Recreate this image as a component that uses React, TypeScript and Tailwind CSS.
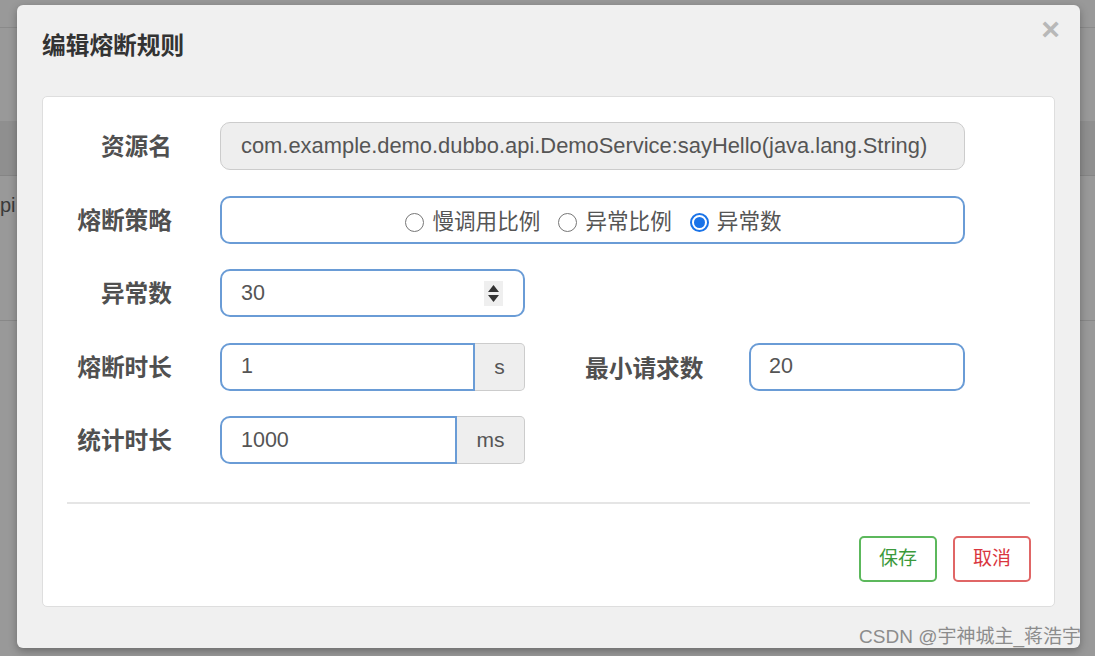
import React from 'react';

const font = { fontFamily: '"Liberation Sans", Arial, "Noto Sans CJK SC", sans-serif' };

const Label: React.FC<{ text: string; w?: string }> = ({ text, w = 'w-[129px]' }) => (
  <div className={`${w} shrink-0 text-right text-[23.7px] font-bold text-[#505050] leading-none pt-[4px]`}>{text}</div>
);

const Radio: React.FC<{ checked?: boolean; text: string }> = ({ checked, text }) => (
  <label className="flex items-center gap-[8px] text-[21.6px] text-[#555]">
    {checked ? (
      <span className="w-[19px] h-[19px] rounded-full border-[2px] border-[#1a73e8] flex items-center justify-center">
        <span className="w-[11px] h-[11px] rounded-full bg-[#1a73e8]" />
      </span>
    ) : (
      <span className="w-[19px] h-[19px] rounded-full border-[1.5px] border-[#777] bg-white" />
    )}
    <span>{text}</span>
  </label>
);

export default function App() {
  return (
    <div className="relative w-[1095px] h-[656px] overflow-hidden bg-[#999999]" style={font}>
      {/* page behind overlay */}
      <div className="h-[27px]" />
      <div className="h-[94px] border-t border-[#8a8a8a]" />
      <div className="h-[55px] bg-[#8f8f8f] border-b border-[#858585]" />
      <div className="h-[144px] pt-[14px] text-[20px] text-[#3a3a3a]">pi</div>
      <div className="border-t border-[#888]" />

      {/* dialog */}
      <div className="absolute left-[17px] top-[5px] w-[1063px] h-[643px] rounded-[6px] bg-[#f0f0f0] shadow-[0_3px_9px_rgba(0,0,0,0.3)] px-[25px]">
        <div className="flex items-start justify-between pt-[30px] h-[91px]">
          <h3 className="text-[23.7px] font-bold text-[#333] leading-none">编辑熔断规则</h3>
          <span className="text-[32px] leading-none font-bold text-[#b8b8b8] -mt-[22px] -mr-[5px]">×</span>
        </div>

        <div className="bg-white border border-[#dedede] rounded-[5px] px-[24px] pt-[25px] pb-[24px]">
          <div className="flex flex-col gap-[25.5px] -ml-[24px]">
            {/* 资源名 */}
            <div className="flex items-center gap-[48px] h-[48px]">
              <Label text="资源名" />
              <div className="w-[745px] h-[48px] rounded-[10px] bg-[#eeeeee] border border-[#cccccc] flex items-center pl-[20px] text-[21.9px] text-[#555]">
                com.example.demo.dubbo.api.DemoService:sayHello(java.lang.String)
              </div>
            </div>

            {/* 熔断策略 */}
            <div className="flex items-center gap-[48px] h-[48px]">
              <Label text="熔断策略" />
              <div className="w-[745px] h-[48px] rounded-[10px] border-[2px] border-[#6a9cd6] flex items-center justify-center gap-[18px] pl-[2px] pt-[6px]">
                <Radio text="慢调用比例" />
                <Radio text="异常比例" />
                <Radio checked text="异常数" />
              </div>
            </div>

            {/* 异常数 */}
            <div className="flex items-center gap-[48px] h-[48px]">
              <Label text="异常数" />
              <div className="w-[305px] h-[48px] rounded-[10px] border-[2px] border-[#6a9cd6] flex items-center pl-[19px] pr-[20px] text-[21.5px] text-[#555]">
                <span className="flex-1">30</span>
                <span className="w-[19px] h-[25px] bg-[#efefef] flex flex-col items-center justify-center gap-[3px]">
                  <svg width="11" height="7" viewBox="0 0 11 7"><path d="M5.5 0 L11 7 L0 7 Z" fill="#333" /></svg>
                  <svg width="11" height="7" viewBox="0 0 11 7"><path d="M0 0 L11 0 L5.5 7 Z" fill="#333" /></svg>
                </span>
              </div>
            </div>

            {/* 熔断时长 / 最小请求数 */}
            <div className="flex items-center h-[48px]">
              <div className="flex items-center gap-[48px]">
                <Label text="熔断时长" />
                <div className="flex h-[48px]">
                  <div className="w-[255px] rounded-l-[10px] border-[2px] border-[#6a9cd6] flex items-center pl-[19px] text-[21.5px] text-[#555]">1</div>
                  <div className="w-[50px] rounded-r-[5px] bg-[#eeeeee] border border-l-0 border-[#cccccc] flex items-center justify-center text-[21px] text-[#555]">s</div>
                </div>
              </div>
              <div className="ml-[60px] w-[120px] text-[23.7px] font-bold text-[#505050] pt-[6px] leading-none">最小请求数</div>
              <div className="ml-[44px] w-[216px] h-[48px] rounded-[10px] border-[2px] border-[#6a9cd6] flex items-center pl-[18px] text-[21.5px] text-[#555]">20</div>
            </div>

            {/* 统计时长 */}
            <div className="flex items-center gap-[48px] h-[48px]">
              <Label text="统计时长" />
              <div className="flex h-[48px]">
                <div className="w-[237px] rounded-l-[10px] border-[2px] border-[#6a9cd6] flex items-center pl-[19px] text-[21.5px] text-[#555]">1000</div>
                <div className="w-[68px] rounded-r-[5px] bg-[#eeeeee] border border-l-0 border-[#cccccc] flex items-center justify-center text-[21px] text-[#555]">ms</div>
              </div>
            </div>
          </div>

          <div className="mt-[38px] border-t-[2px] border-[#e5e5e5]" />

          <div className="flex justify-end gap-[16px] mt-[32px] -mr-[1px]">
            <button className="w-[78px] h-[46px] rounded-[5px] border-[2px] border-[#5cb85c] bg-white text-[19px] text-[#3c9a3c]">保存</button>
            <button className="w-[78px] h-[46px] rounded-[5px] border-[2px] border-[#e06666] bg-white text-[19px] text-[#d9363e]">取消</button>
          </div>
        </div>
      </div>

      {/* watermark */}
      <div className="absolute right-[14px] top-[627px] text-[19px] text-[#8c8c8c] leading-none">CSDN @宇神城主_蒋浩宇</div>
    </div>
  );
}
